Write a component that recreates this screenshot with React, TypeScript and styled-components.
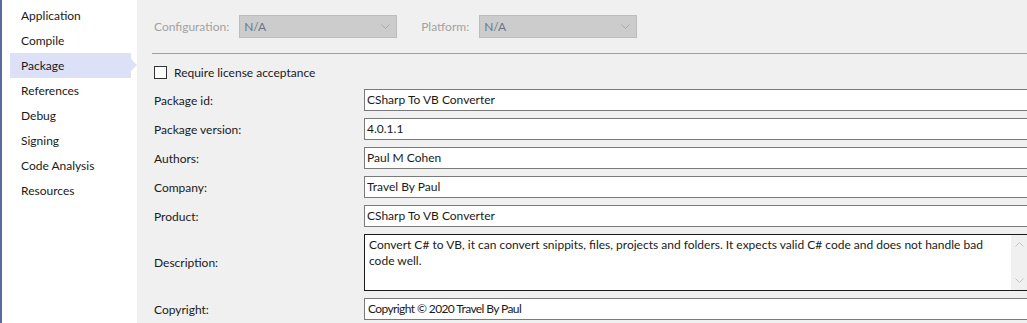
import styled, { createGlobalStyle } from 'styled-components'

const GlobalStyle = createGlobalStyle`
  html, body {
    margin: 0;
    padding: 0;
    background: #f0f0f0;
  }
  body {
    font-family: Lato, 'Noto Sans', 'Liberation Sans', sans-serif;
    font-size: 12px;
    color: #1a1a1a;
  }
`

const navItems = ['Application', 'Compile', 'Package', 'References', 'Debug', 'Signing', 'Code Analysis', 'Resources']

const fields = [
  { label: 'Package id:', value: 'CSharp To VB Converter' },
  { label: 'Package version:', value: '4.0.1.1' },
  { label: 'Authors:', value: 'Paul M Cohen' },
  { label: 'Company:', value: 'Travel By Paul' },
  { label: 'Product:', value: 'CSharp To VB Converter' },
]

const Chevron = ({ up, color }: { up?: boolean; color: string }) => (
  <svg width="9" height="5" viewBox="0 0 9 5">
    <polyline
      points={up ? '0.5,4.5 4.5,0.5 8.5,4.5' : '0.5,0.5 4.5,4.5 8.5,0.5'}
      fill="none"
      stroke={color}
      strokeWidth="1"
    />
  </svg>
)

const App = () => {
  return (
    <>
      <GlobalStyle />
      <Page>
        <Sidebar>
          {navItems.map((item) => (
            <NavItem key={item} active={item === 'Package'}>
              {item}
            </NavItem>
          ))}
        </Sidebar>
        <Main>
          <Toolbar>
            <DimLabel>Configuration:</DimLabel>
            <Combo>
              <span>N/A</span>
              <Chevron color="#a9a9a9" />
            </Combo>
            <DimLabel>Platform:</DimLabel>
            <Combo>
              <span>N/A</span>
              <Chevron color="#a9a9a9" />
            </Combo>
          </Toolbar>
          <Separator />
          <CheckRow>
            <CheckBox />
            <span>Require license acceptance</span>
          </CheckRow>
          <Form>
            {fields.map((f) => (
              <FieldRow key={f.label}>
                <Label>{f.label}</Label>
                <TextBox>{f.value}</TextBox>
              </FieldRow>
            ))}
            <Label>Description:</Label>
            <TextArea>
              <AreaText>
                Convert C# to VB, it can convert snippits, files, projects and folders. It expects valid C# code and
                does not handle bad code well.
              </AreaText>
              <ScrollBar>
                <Chevron up color="#c2c2c2" />
                <Chevron color="#c2c2c2" />
              </ScrollBar>
            </TextArea>
            <Label>Copyright:</Label>
            <TextBox narrow>Copyright © 2020 Travel By Paul</TextBox>
          </Form>
        </Main>
      </Page>
    </>
  )
}

const Page = styled.div`
  display: flex;
  width: 1027px;
  height: 323px;
  overflow: hidden;
`

const Sidebar = styled.nav`
  width: 135px;
  flex-shrink: 0;
  background: #ffffff;
  border-left: 2px solid #5d6b9c;
  padding-top: 3px;
  box-sizing: content-box;
`

const NavItem = styled.div<{ active?: boolean }>`
  position: relative;
  height: 25px;
  line-height: 25px;
  margin-left: 8px;
  width: 121px;
  padding-left: 11px;
  box-sizing: border-box;
  background: ${({ active }) => (active ? '#dde1f7' : 'transparent')};

  &::after {
    content: '';
    display: ${({ active }) => (active ? 'block' : 'none')};
    position: absolute;
    right: -6px;
    top: 6px;
    border-left: 6px solid #dde1f7;
    border-top: 6.5px solid transparent;
    border-bottom: 6.5px solid transparent;
  }
`

const Main = styled.main`
  flex: 1;
  min-width: 0;
  background: #f0f0f0;
  padding: 15px 0 0 15px;
  overflow: hidden;
`

const Toolbar = styled.div`
  display: flex;
  align-items: center;
  height: 23px;
  padding-left: 2px;
`

const DimLabel = styled.span`
  color: #a2a2a2;
  margin-right: 10px;
`

const Combo = styled.div`
  display: flex;
  align-items: center;
  justify-content: space-between;
  width: 158px;
  height: 23px;
  box-sizing: border-box;
  background: #cccccc;
  border: 1px solid #bdbdbd;
  padding: 0 6px 0 4px;
  margin-right: 24px;
  color: #6d7688;
`

const Separator = styled.div`
  height: 1px;
  background: #a0a0a0;
  margin-top: 15px;
`

const CheckRow = styled.label`
  display: flex;
  align-items: center;
  gap: 7px;
  height: 13px;
  margin-top: 12px;
  padding-left: 2px;
`

const CheckBox = styled.span`
  width: 13px;
  height: 13px;
  box-sizing: border-box;
  border: 1px solid #333333;
  background: #ffffff;
`

const Form = styled.div`
  display: grid;
  grid-template-columns: 212px 666px;
  row-gap: 7px;
  margin-top: 10px;
  align-items: center;
`

const FieldRow = styled.div`
  display: contents;
`

const Label = styled.span`
  padding-left: 2px;
`

const TextBox = styled.div<{ narrow?: boolean }>`
  height: 22px;
  box-sizing: border-box;
  border: 1px solid #7a7a7a;
  background: #ffffff;
  padding-left: ${({ narrow }) => (narrow ? 3 : 2)}px;
  line-height: 20px;
  white-space: nowrap;
  letter-spacing: ${({ narrow }) => (narrow ? '-0.6px' : '0')};
`

const TextArea = styled.div`
  display: flex;
  height: 57px;
  box-sizing: border-box;
  border: 1px solid #1a1a1a;
  background: #ffffff;
`

const AreaText = styled.div`
  flex: 1;
  padding: 2px 14px 0 4px;
  line-height: 16px;
`

const ScrollBar = styled.div`
  width: 17px;
  flex-shrink: 0;
  margin-right: 1px;
  background: #f0f0f0;
  display: flex;
  flex-direction: column;
  align-items: center;
  justify-content: space-between;
  padding: 7px 0 7px;
  box-sizing: border-box;
`

export default App
